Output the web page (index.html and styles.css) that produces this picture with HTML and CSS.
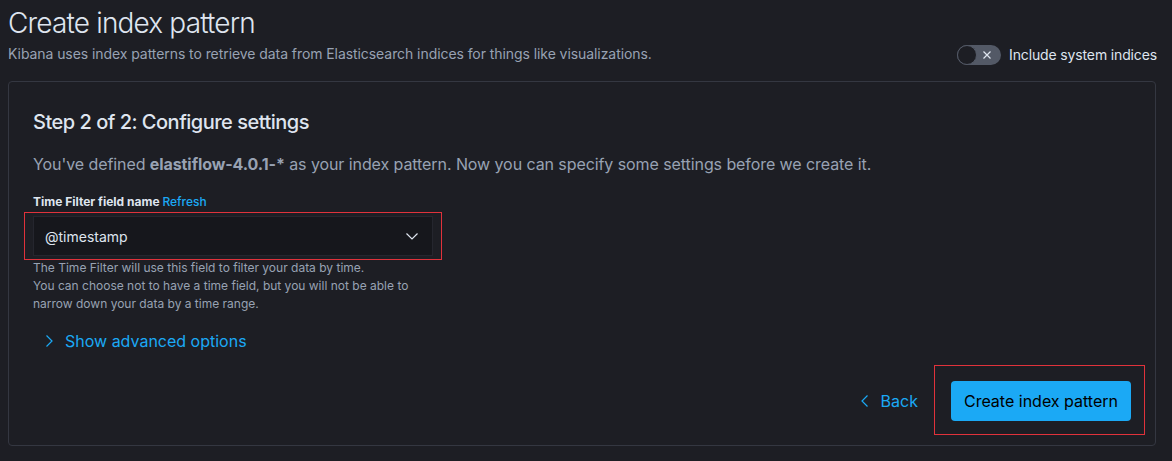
FILE: index.html
```html
<!DOCTYPE html>
<html lang="en">
<head>
<meta charset="utf-8">
<title>Create index pattern</title>
<link rel="stylesheet" href="styles.css">
</head>
<body>
<div class="page">
  <header class="page-header">
    <div class="header-text">
      <h1 class="title">Create index pattern</h1>
      <p class="subtitle">Kibana uses index patterns to retrieve data from Elasticsearch indices for things like visualizations.</p>
    </div>
    <label class="switch">
      <span class="switch-track">
        <span class="switch-knob"></span>
        <svg class="switch-x" width="16" height="16" viewBox="0 0 16 16"><path d="M4.5 4.5l7 7M11.5 4.5l-7 7" stroke="#dfe5ef" stroke-width="1.2" fill="none"/></svg>
      </span>
      <span class="switch-label">Include system indices</span>
    </label>
  </header>

  <section class="panel">
    <h2 class="step-title">Step 2 of 2: Configure settings</h2>
    <p class="intro">You've defined <strong>elastiflow-4.0.1-*</strong> as your index pattern. Now you can specify some settings before we create it.</p>

    <div class="form-row">
      <div class="form-label">Time Filter field name <span class="link">Refresh</span></div>
      <div class="highlight highlight-select">
        <div class="select">
          <span>@timestamp</span>
          <svg width="16" height="16" viewBox="0 0 16 16"><path d="M2.5 5.5l5.5 5.5 5.5-5.5" stroke="#dfe5ef" stroke-width="1.2" fill="none"/></svg>
        </div>
      </div>
      <div class="help">The Time Filter will use this field to filter your data by time.<br>You can choose not to have a time field, but you will not be able to<br>narrow down your data by a time range.</div>
    </div>

    <div class="advanced">
      <svg width="16" height="16" viewBox="0 0 16 16"><path d="M5.5 2.5l5.5 5.5-5.5 5.5" stroke="#1ba9f5" stroke-width="1.2" fill="none"/></svg>
      <span>Show advanced options</span>
    </div>

    <div class="actions">
      <button class="btn-empty">
        <svg width="16" height="16" viewBox="0 0 16 16"><path d="M10.5 2.5l-5.5 5.5 5.5 5.5" stroke="#1ba9f5" stroke-width="1.2" fill="none"/></svg>
        <span>Back</span>
      </button>
      <div class="highlight highlight-btn">
        <button class="btn-primary">Create index pattern</button>
      </div>
    </div>
  </section>
</div>
</body>
</html>
```

FILE: styles.css
```css
* { box-sizing: border-box; }
html, body { margin: 0; padding: 0; }
body {
  background: #1d1e24;
  font-family: Inter, "Noto Sans", sans-serif;
  color: #dfe5ef;
  width: 1172px;
  height: 461px;
  overflow: hidden;
}
.page { padding: 0 16px 0 8px; }
.page-header {
  display: flex;
  justify-content: space-between;
  align-items: flex-end;
}
.title {
  margin: 0;
  padding-top: 5px;
  font-size: 28px;
  line-height: 36px;
  font-weight: 300;
  letter-spacing: -0.03em;
  color: #dfe5ef;
}
.subtitle {
  margin: 3px 0 0;
  font-size: 14px;
  line-height: 20px;
  letter-spacing: -0.005em;
  color: #98a2b3;
}
.switch {
  display: flex;
  align-items: center;
  gap: 8px;
  margin-bottom: -1px;
  margin-right: -1px;
}
.switch-track {
  position: relative;
  width: 44px;
  height: 20px;
  border-radius: 10px;
  background: #535966;
  display: flex;
  align-items: center;
  justify-content: flex-end;
  padding-right: 6px;
}
.switch-knob {
  position: absolute;
  left: 0;
  top: 0;
  width: 20px;
  height: 20px;
  border-radius: 50%;
  background: #1d1e24;
  border: 1px solid #535966;
}
.switch-x { display: block; }
.switch-label {
  font-size: 14px;
  line-height: 20px;
  letter-spacing: -0.01em;
  color: #dfe5ef;
}
.panel {
  margin-top: 17px;
  height: 365px;
  border: 1px solid #343741;
  border-radius: 4px;
  background: #1d1e24;
  padding: 24px;
  display: flex;
  flex-direction: column;
}
.step-title {
  margin: 0;
  font-size: 20px;
  line-height: 32px;
  font-weight: 500;
  letter-spacing: -0.025em;
  color: #dfe5ef;
}
.intro {
  margin: 14px 0 0;
  font-size: 16px;
  line-height: 24px;
  letter-spacing: -0.005em;
  color: #98a2b3;
}
.intro strong { font-weight: 700; }
.form-row { margin-top: 17px; width: 400px; }
.form-label {
  font-size: 12px;
  line-height: 18px;
  font-weight: 700;
  color: #dfe5ef;
}
.link { color: #1ba9f5; font-weight: 500; }
.highlight { position: relative; }
.highlight::after {
  content: "";
  position: absolute;
  border: 1px solid #e0323b;
  pointer-events: none;
}
.highlight-select { margin-top: 5px; }
.highlight-select::after { left: -9px; right: -9px; top: -4px; bottom: -4px; }
.select {
  height: 40px;
  background: #16171c;
  border: 1px solid #25262e;
  display: flex;
  align-items: center;
  justify-content: space-between;
  padding: 0 12px 0 11px;
  font-size: 14px;
  color: #dfe5ef;
}
.select svg { display: block; }
.help {
  margin-top: 3px;
  font-size: 12px;
  line-height: 18px;
  color: #98a2b3;
}
.advanced {
  margin-top: 16px;
  display: flex;
  align-items: center;
  gap: 8px;
  padding-left: 8px;
  font-size: 16px;
  line-height: 24px;
  color: #1ba9f5;
}
.advanced svg { display: block; }
.actions {
  margin-top: 28px;
  display: flex;
  justify-content: flex-end;
  align-items: center;
  gap: 25px;
}
.btn-empty {
  background: none;
  border: none;
  height: 40px;
  padding: 0 8px;
  display: flex;
  align-items: center;
  gap: 8px;
  font-family: inherit;
  font-size: 16px;
  color: #1ba9f5;
}
.btn-empty svg { display: block; }
.highlight-btn::after { left: -17px; right: -14px; top: -16px; bottom: -14px; }
.btn-primary {
  height: 40px;
  padding: 0 13px;
  border: none;
  border-radius: 4px;
  background: #1ba9f5;
  color: #000;
  font-family: inherit;
  font-size: 16px;
  display: block;
}
```
